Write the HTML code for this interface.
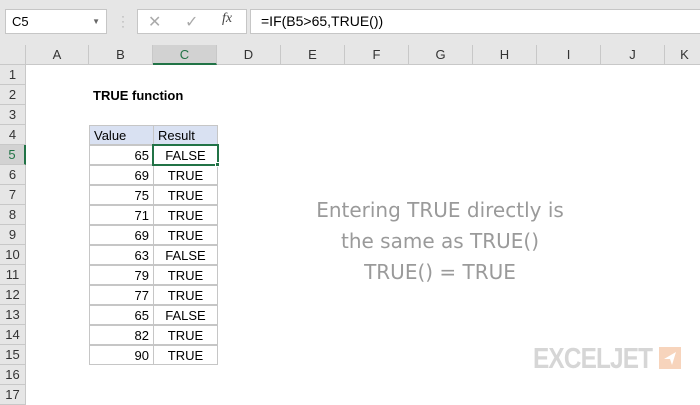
<!DOCTYPE html>
<html><head><style>
*{margin:0;padding:0;box-sizing:border-box}
body{width:700px;height:400px;overflow:hidden;background:#fff;font-family:"Liberation Sans",Calibri,sans-serif;font-size:13px;color:#000;position:relative}
.abs{position:absolute}
.top{left:0;top:0;width:700px;height:45px;background:#e6e6e6}
.box{background:#fff;border:1px solid #c6c6c6}
.colh{top:45px;height:20px;background:#e6e6e6;border-right:1px solid #c8c8c8;border-bottom:1px solid #c8c8c8;text-align:center;line-height:19px;color:#333}
.rowh{left:0;width:26px;height:20px;background:#e6e6e6;border-bottom:1px solid #c8c8c8;border-right:1px solid #c8c8c8;text-align:center;line-height:20px;color:#333}
.cell{height:20px;border:1px solid #c6c6c6;line-height:19px;padding:0 4px}
.note{left:290px;width:300px;text-align:center;color:#9a9a9a;font-size:20px;font-family:"Comic Sans MS","DejaVu Sans",sans-serif}
</style></head><body>
<div class="abs top"></div>
<div class="abs box" style="left:5px;top:9px;width:102px;height:25px;line-height:23px;padding-left:6px">C5<span style="position:absolute;right:6px;top:0;font-size:8px;color:#666">▼</span></div>
<div class="abs" style="left:121px;top:14px;color:#aaa;font-size:12px;line-height:5px">·<br>·<br>·</div>
<div class="abs box" style="left:137px;top:9px;width:110px;height:25px"></div>
<div class="abs" style="left:148px;top:12px;color:#aaa;font-size:16px">✕</div>
<div class="abs" style="left:185px;top:12px;color:#aaa;font-size:16px">✓</div>
<div class="abs" style="left:222px;top:11px;color:#444;font-size:14px;font-style:italic;font-family:'Liberation Serif',serif">fx</div>
<div class="abs box" style="left:250px;top:9px;width:452px;height:25px;line-height:23px;padding-left:10px;font-size:14px">=IF(B5&gt;65,TRUE())</div>

<div class="abs colh" style="left:0;width:26px"></div>
<div class="abs colh" style="left:26px;width:63px">A</div>
<div class="abs colh" style="left:89px;width:64px">B</div>
<div class="abs colh" style="left:153px;width:64px;background:#d2d2d2;border-bottom:2px solid #217346;color:#217346">C</div>
<div class="abs colh" style="left:217px;width:64px">D</div>
<div class="abs colh" style="left:281px;width:64px">E</div>
<div class="abs colh" style="left:345px;width:64px">F</div>
<div class="abs colh" style="left:409px;width:64px">G</div>
<div class="abs colh" style="left:473px;width:64px">H</div>
<div class="abs colh" style="left:537px;width:64px">I</div>
<div class="abs colh" style="left:601px;width:64px">J</div>
<div class="abs colh" style="left:665px;width:40px">K</div>

<div class="abs rowh" style="top:65px">1</div>
<div class="abs rowh" style="top:85px">2</div>
<div class="abs rowh" style="top:105px">3</div>
<div class="abs rowh" style="top:125px">4</div>
<div class="abs rowh" style="top:145px;background:#d2d2d2;border-right:2px solid #217346;color:#217346">5</div>
<div class="abs rowh" style="top:165px">6</div>
<div class="abs rowh" style="top:185px">7</div>
<div class="abs rowh" style="top:205px">8</div>
<div class="abs rowh" style="top:225px">9</div>
<div class="abs rowh" style="top:245px">10</div>
<div class="abs rowh" style="top:265px">11</div>
<div class="abs rowh" style="top:285px">12</div>
<div class="abs rowh" style="top:305px">13</div>
<div class="abs rowh" style="top:325px">14</div>
<div class="abs rowh" style="top:345px">15</div>
<div class="abs rowh" style="top:365px">16</div>
<div class="abs rowh" style="top:385px">17</div>

<div class="abs" style="left:93px;top:88px;font-weight:bold;font-size:13px">TRUE function</div>

<div class="abs cell" style="left:89px;top:125px;width:65px;background:#d9e1f2">Value</div>
<div class="abs cell" style="left:153px;top:125px;width:65px;background:#d9e1f2">Result</div>

<div class="abs cell" style="left:89px;top:145px;width:65px;text-align:right">65</div>
<div class="abs cell" style="left:89px;top:165px;width:65px;text-align:right">69</div>
<div class="abs cell" style="left:89px;top:185px;width:65px;text-align:right">75</div>
<div class="abs cell" style="left:89px;top:205px;width:65px;text-align:right">71</div>
<div class="abs cell" style="left:89px;top:225px;width:65px;text-align:right">69</div>
<div class="abs cell" style="left:89px;top:245px;width:65px;text-align:right">63</div>
<div class="abs cell" style="left:89px;top:265px;width:65px;text-align:right">79</div>
<div class="abs cell" style="left:89px;top:285px;width:65px;text-align:right">77</div>
<div class="abs cell" style="left:89px;top:305px;width:65px;text-align:right">65</div>
<div class="abs cell" style="left:89px;top:325px;width:65px;text-align:right">82</div>
<div class="abs cell" style="left:89px;top:345px;width:65px;text-align:right">90</div>

<div class="abs cell" style="left:153px;top:145px;width:65px;text-align:center">FALSE</div>
<div class="abs cell" style="left:153px;top:165px;width:65px;text-align:center">TRUE</div>
<div class="abs cell" style="left:153px;top:185px;width:65px;text-align:center">TRUE</div>
<div class="abs cell" style="left:153px;top:205px;width:65px;text-align:center">TRUE</div>
<div class="abs cell" style="left:153px;top:225px;width:65px;text-align:center">TRUE</div>
<div class="abs cell" style="left:153px;top:245px;width:65px;text-align:center">FALSE</div>
<div class="abs cell" style="left:153px;top:265px;width:65px;text-align:center">TRUE</div>
<div class="abs cell" style="left:153px;top:285px;width:65px;text-align:center">TRUE</div>
<div class="abs cell" style="left:153px;top:305px;width:65px;text-align:center">FALSE</div>
<div class="abs cell" style="left:153px;top:325px;width:65px;text-align:center">TRUE</div>
<div class="abs cell" style="left:153px;top:345px;width:65px;text-align:center">TRUE</div>
<div class="abs" style="left:152px;top:144px;width:67px;height:22px;border:2px solid #217346"></div>
<div class="abs" style="left:215px;top:162px;width:5px;height:5px;background:#217346;border:1px solid #fff"></div>

<div class="abs note" style="top:198px">Entering TRUE directly is</div>
<div class="abs note" style="top:229px">the same as TRUE()</div>
<div class="abs note" style="top:260px">TRUE() = TRUE</div>

<div class="abs" style="left:533px;top:342px;font-size:29px;font-weight:bold;color:#d6d6d6;letter-spacing:-1px;line-height:34px;transform:scaleX(0.84);transform-origin:0 0;white-space:nowrap">EXCELJET</div>
<svg class="abs" style="left:659px;top:347px" width="22" height="22" viewBox="0 0 22 22"><rect width="22" height="22" fill="#f7d4bc"/><path d="M5 12 L17 5 L13 18 L11 12 Z" fill="#fff"/></svg>
</body></html>
